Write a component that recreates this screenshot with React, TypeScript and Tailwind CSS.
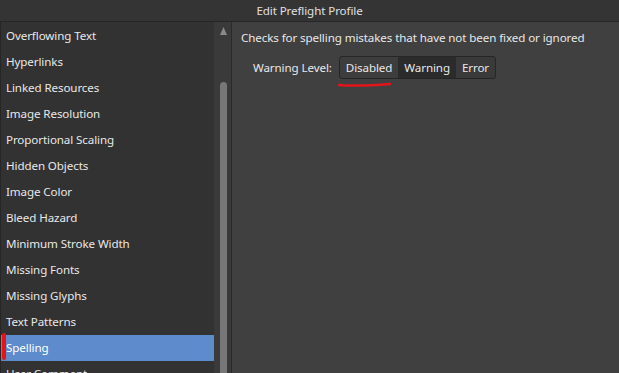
import React from "react";

const items = [
  "Overflowing Text",
  "Hyperlinks",
  "Linked Resources",
  "Image Resolution",
  "Proportional Scaling",
  "Hidden Objects",
  "Image Color",
  "Bleed Hazard",
  "Minimum Stroke Width",
  "Missing Fonts",
  "Missing Glyphs",
  "Text Patterns",
  "Spelling",
  "User Comment",
];

export default function App() {
  return (
    <div
      className="w-[619px] h-[373px] overflow-hidden flex flex-col bg-[#404040] text-[#e8e8e8] text-[11.6px] tracking-[-0.1px]"
      style={{ fontFamily: '"Noto Sans", "Open Sans", sans-serif' }}
    >
      <div className="h-[22px] shrink-0 bg-[#343434] border-b border-[#262626] flex items-center justify-center text-[#e0e0e0]">
        Edit Preflight Profile
      </div>
      <div className="flex flex-1 min-h-0">
        <div className="relative w-[214px] shrink-0 bg-[#323232] border-l border-[#262626] overflow-hidden pt-[1px]">
          {items.map((it) => (
            <div
              key={it}
              className={
                "h-[26px] flex items-center pl-[5px] whitespace-nowrap " +
                (it === "Spelling" ? "bg-[#5e8bcb] text-white" : "")
              }
            >
              {it}
            </div>
          ))}
          <div className="absolute left-[1px] top-[311px] w-[4px] h-[27px] rounded-full bg-[#e3151b]" />
        </div>
        <div className="relative w-[18px] shrink-0 bg-[#3a3a3a] border-r border-[#2a2a2a]">
          <svg className="absolute left-[6px] top-[5px]" width="7" height="8" viewBox="0 0 7 8">
            <polygon points="3.5,0 7,8 0,8" fill="#8a8a8a" />
          </svg>
          <div className="absolute left-[6px] top-[60px] w-[7px] h-[320px] rounded-full bg-[#777777]" />
        </div>
        <div className="flex-1 flex flex-col pl-[9px] pt-[7px]">
          <div className="h-[18px] flex items-center whitespace-nowrap">
            Checks for spelling mistakes that have not been fixed or ignored
          </div>
          <div className="flex items-center mt-[9px] pl-[12px]">
            <span className="mr-[7px]">Warning Level:</span>
            <div className="relative flex h-[23px] rounded-[3px] border border-[#262626] bg-[#2a2a2a] overflow-visible">
              <div className="flex items-center px-[6px] bg-[#3d3d3d] rounded-l-[2px]">Disabled</div>
              <div className="flex items-center px-[6px] bg-[#2b2b2b]">Warning</div>
              <div className="flex items-center px-[6px] bg-[#3a3a3a] rounded-r-[2px]">Error</div>
              <svg className="absolute left-[-2px] top-[25px]" width="56" height="6" viewBox="0 0 56 6">
                <path d="M1 3 Q20 4.5 52 2" stroke="#e3151b" strokeWidth="2.5" fill="none" strokeLinecap="round" />
              </svg>
            </div>
          </div>
        </div>
      </div>
    </div>
  );
}
